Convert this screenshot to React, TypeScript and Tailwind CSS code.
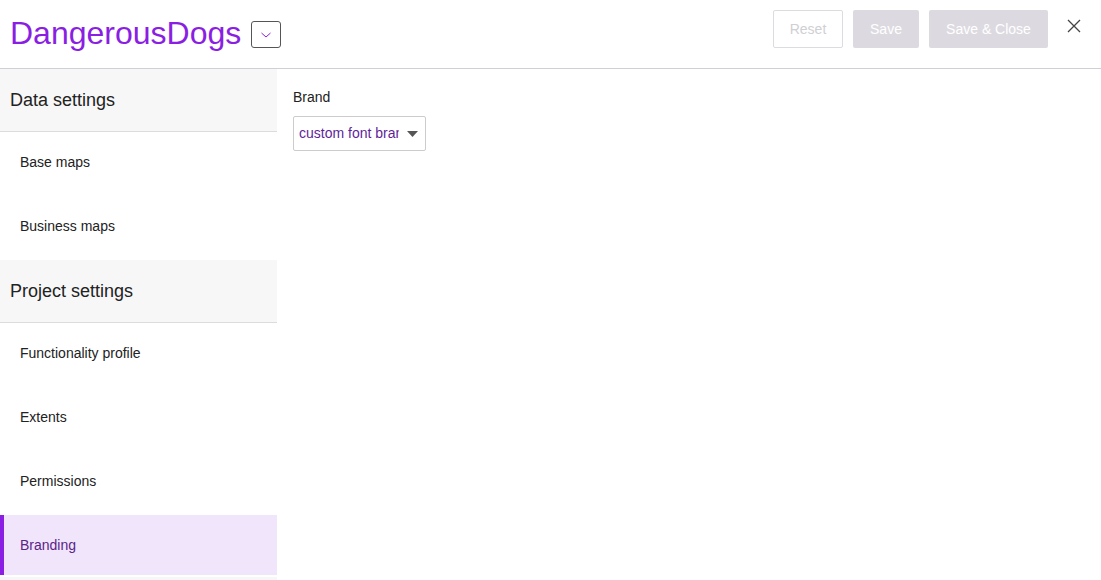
import React from 'react';

const navSections = [
  { title: 'Data settings', items: ['Base maps', 'Business maps'] },
  { title: 'Project settings', items: ['Functionality profile', 'Extents', 'Permissions', 'Branding'] },
];

const App: React.FC = () => {
  const active = 'Branding';

  return (
    <div className="h-[580px] w-[1101px] overflow-hidden bg-white font-['Liberation_Sans',Arial,sans-serif] text-[#222]">
      <header className="flex h-[69px] items-start justify-between border-b border-[#cfcfd6]">
        <div className="flex items-center pl-[10px] pt-[14px]">
          <h1 className="text-[32px] leading-[38px] text-[#8a1fe3]">DangerousDogs</h1>
          <button className="ml-[10px] mt-[3px] flex h-[27px] w-[30px] items-center justify-center rounded-[3px] border border-[#555]">
            <svg width="12" height="8" viewBox="0 0 12 8" fill="none">
              <path d="M1.5 2 L6 6 L10.5 2" stroke="#8a1fe3" strokeWidth="1" />
            </svg>
          </button>
        </div>
        <div className="flex items-start pr-[19px] pt-[10px]">
          <button className="h-[38px] w-[70px] rounded-[2px] border border-[#dcdce0] bg-white text-[14px] text-[#cfcfd4]">Reset</button>
          <button className="ml-[10px] h-[38px] w-[66px] rounded-[2px] bg-[#dcdae0] text-[14px] text-white">Save</button>
          <button className="ml-[10px] h-[38px] w-[119px] rounded-[2px] bg-[#dcdae0] text-[14px] text-white">Save &amp; Close</button>
          <button className="ml-[18px] mt-[8px] flex h-[16px] w-[16px] items-center justify-center">
            <svg width="14" height="14" viewBox="0 0 14 14">
              <path d="M1 1 L13 13 M13 1 L1 13" stroke="#444" strokeWidth="1.3" />
            </svg>
          </button>
        </div>
      </header>
      <div className="flex">
        <nav className="w-[277px] shrink-0">
          {navSections.map((s) => (
            <div key={s.title}>
              <div className="flex h-[63px] items-center border-b border-[#dcdcdc] bg-[#f7f7f7] pl-[10px] text-[18px] text-[#222]">
                {s.title}
              </div>
              {s.items.map((item) =>
                item === active ? (
                  <div
                    key={item}
                    className="flex h-[60px] items-center border-l-[4px] border-[#8a1fe3] bg-[#f0e5fa] pl-[16px] text-[14px] text-[#5a2488]"
                  >
                    {item}
                  </div>
                ) : (
                  <div key={item} className="flex h-[64px] items-center pb-[4px] pl-[20px] text-[14px] text-[#222]">
                    {item}
                  </div>
                )
              )}
            </div>
          ))}
          <div className="mt-[2px] h-[20px] bg-[#f7f7f7]" />
        </nav>
        <main className="flex-1 pl-[16px] pt-[20px]">
          <label className="block text-[14px] leading-[16px] text-[#222]">Brand</label>
          <div className="mt-[11px] flex h-[35px] w-[133px] items-center rounded-[2px] border border-[#ccc] pl-[5px] pr-[7px]">
            <span className="flex-1 overflow-hidden whitespace-nowrap text-[14px] text-[#5f1f9a]">custom font brand</span>
            <svg width="11" height="6" viewBox="0 0 11 6" className="ml-[8px] shrink-0">
              <path d="M0 0 L11 0 L5.5 6 Z" fill="#555" />
            </svg>
          </div>
        </main>
      </div>
    </div>
  );
};

export default App;
